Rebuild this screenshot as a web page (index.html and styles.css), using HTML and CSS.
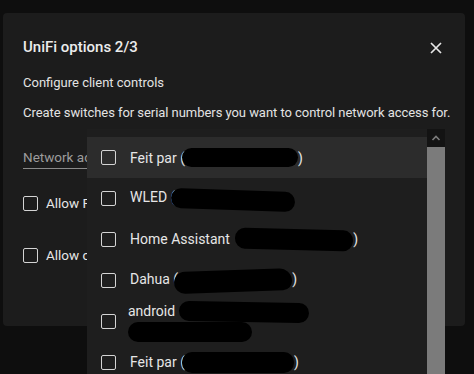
FILE: index.html
```html
<!DOCTYPE html>
<html>
<head>
<meta charset="utf-8">
<link rel="stylesheet" href="styles.css">
</head>
<body>
<div class="dialog">
  <div class="head">
    <h2 class="title">UniFi options 2/3</h2>
    <svg class="close" width="14" height="14" viewBox="0 0 14 14"><path d="M2 2L12 12M12 2L2 12" stroke="#e6e6e6" stroke-width="1.7" fill="none"/></svg>
  </div>
  <p class="sub">Configure client controls</p>
  <p class="desc">Create switches for serial numbers you want to control network access for.</p>
  <div class="field">
    <span class="label">Network access</span>
  </div>
  <label class="check first"><span class="box"></span><span>Allow PoE</span></label>
  <label class="check second"><span class="box"></span><span>Allow clients</span></label>
</div>

<div class="menu">
  <div class="list">
    <div class="item active"><span class="box"></span><span class="txt">Feit par (<span class="blob b1"></span>)</span></div>
    <div class="item"><span class="box"></span><span class="txt">WLED (<span class="blob b2"></span></span></div>
    <div class="item"><span class="box"></span><span class="txt">Home Assistant <span class="blob b3"></span>)</span></div>
    <div class="item"><span class="box"></span><span class="txt">Dahua (<span class="blob b4"></span>)</span></div>
    <div class="item two"><span class="box"></span><span class="txt"><span class="line">android<span class="blob b5"></span></span><span class="line"><span class="blob b6"></span></span></span></div>
    <div class="item"><span class="box"></span><span class="txt">Feit par (<span class="blob b7"></span>)</span></div>
  </div>
  <div class="scrollbar">
    <div class="sbtn"><svg width="10" height="6" viewBox="0 0 10 6"><path d="M1.5 5L5 1.5L8.5 5" stroke="#7c7c7c" stroke-width="1.6" fill="none"/></svg></div>
    <div class="thumb"></div>
  </div>
</div>
</body>
</html>
```
FILE: styles.css
```css
html, body {
  margin: 0;
  padding: 0;
  background: #0e0e0e;
  height: 100%;
  overflow: hidden;
}
body {
  font-family: Roboto, "Liberation Sans", sans-serif;
  color: #e3e3e3;
  position: relative;
}
.dialog {
  box-sizing: border-box;
  margin: 13px 0 0 3px;
  width: 462px;
  height: 313px;
  background: #1c1c1c;
  border-radius: 4px;
  padding: 24px 20px 0 20px;
}
.head {
  display: flex;
  justify-content: space-between;
  align-items: center;
  height: 20px;
}
.title {
  margin: 0;
  font-size: 15px;
  line-height: 20px;
  font-weight: 500;
  color: #ececec;
}
.close {
  margin-right: 2px;
  margin-top: 1px;
}
.sub {
  margin: 16px 0 0 0;
  font-size: 13px;
  line-height: 20px;
}
.desc {
  margin: 10px 0 0 0;
  font-size: 13px;
  line-height: 20px;
  white-space: nowrap;
  letter-spacing: -0.05px;
}
.field {
  margin-top: 24px;
  height: 21px;
  border-bottom: 1px solid #8a8a8a;
}
.label {
  font-size: 13.5px;
  line-height: 20px;
  color: #9c9c9c;
}
.check {
  display: flex;
  align-items: center;
  gap: 8px;
  font-size: 13.5px;
  line-height: 20px;
  font-weight: 400;
  color: #e6e6e6;
}
.check.first { margin-top: 24px; }
.check.second { margin-top: 32px; }
.box {
  box-sizing: border-box;
  width: 15px;
  height: 15px;
  border: 1.6px solid #d4d4d4;
  border-radius: 2px;
  flex: none;
}
.menu {
  position: absolute;
  left: 87px;
  top: 129px;
  width: 358px;
  height: 260px;
  display: flex;
  background: #1e1e1e;
}
.list {
  flex: 1;
  padding-top: 8px;
}
.item {
  height: 41px;
  display: flex;
  align-items: center;
  padding-left: 14px;
  gap: 14px;
  font-size: 14px;
  line-height: 20px;
  color: #e6e6e6;
  white-space: nowrap;
}
.item.active { background: #2c2c2c; }
.item.two .txt {
  display: flex;
  flex-direction: column;
  margin-left: -2px;
  margin-top: -2px;
}
.line { display: block; height: 20px; }
.blob {
  display: inline-block;
  background: #000;
  vertical-align: middle;
  border-radius: 10px;
}
.b1 { width: 116px; height: 19px; margin-left: -3px; margin-top: -2px; }
.b2 { width: 124px; height: 20px; margin-left: -4px; transform: rotate(2deg); margin-top: 2px; }
.b3 { width: 118px; height: 21px; margin-left: 2px; transform: rotate(1.5deg); }
.b4 { width: 118px; height: 22px; margin-left: -4px; border-radius: 12px 14px 10px 12px; transform: rotate(-2deg); }
.b5 { width: 130px; height: 20px; margin-left: 4px; transform: rotate(1deg); }
.b6 { width: 124px; height: 20px; margin-left: 0; }
.b7 { width: 112px; height: 21px; margin-left: -3px; }
.scrollbar {
  width: 18px;
  display: flex;
  flex-direction: column;
}
.sbtn {
  height: 18px;
  background: #131313;
  display: flex;
  align-items: center;
  justify-content: center;
}
.thumb {
  flex: 1;
  background: #7b7b7b;
}
```
